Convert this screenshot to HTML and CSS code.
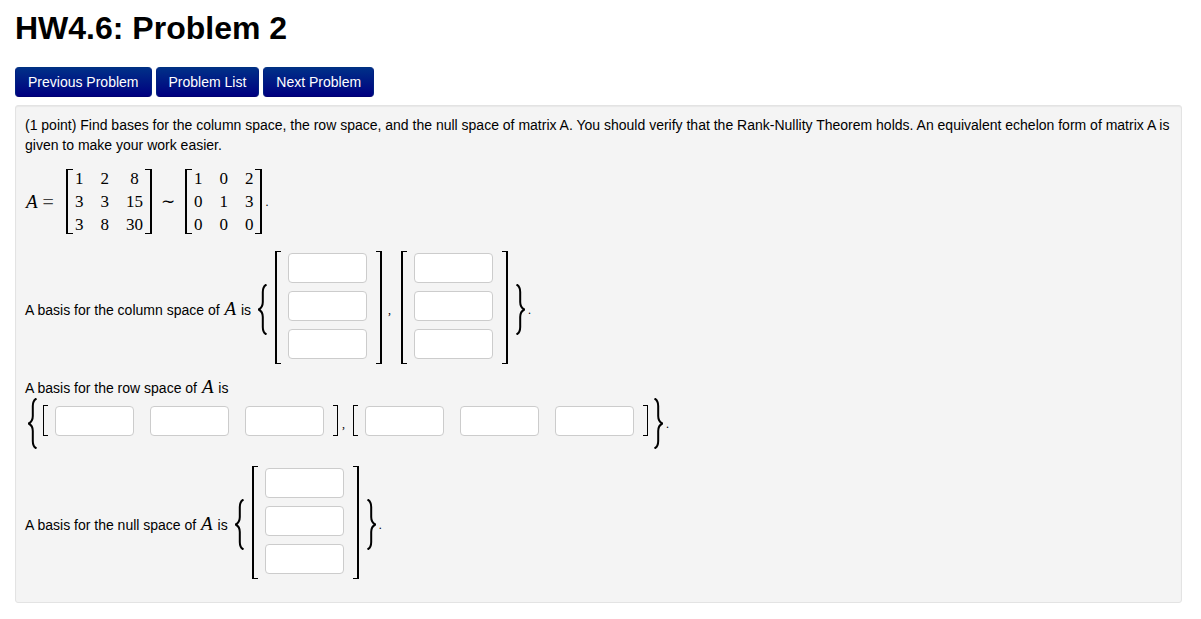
FILE: index.html
```html
<!DOCTYPE html>
<html lang="en">
<head>
  <meta charset="UTF-8">
  <meta name="viewport" content="width=device-width, initial-scale=1.0">
  <title>HW4.6: Problem 2</title>
  <link rel="stylesheet" href="styles.css">
</head>
<body>
  <!-- stretched braces, used around each basis -->
  <svg class="defs" aria-hidden="true">
    <symbol id="brace" viewBox="0 0 9 51">
      <path d="M8.500 .5C5.500 2 4.800 4.500 4.800 8V18C4.800 22 3.500 24 .7 25.500C3.500 27 4.800 29 4.800 33V43C4.800 46.500 5.500 49 8.500 50.500"/>
    </symbol>
  </svg>

  <h1>HW4.6: Problem 2</h1>
  <nav class="problem-nav">
    <a class="btn" href="#prev">Previous Problem</a>
    <a class="btn" href="#list">Problem List</a>
    <a class="btn" href="#next">Next Problem</a>
  </nav>

  <form class="problem">
    <p>(1 point) Find bases for the column space, the row space, and the null space of matrix A. You should verify that the Rank-Nullity Theorem holds. An equivalent echelon form of matrix A is given to make your work easier.</p>

    <div class="equation">
      <i>A</i>
      <span class="sign">=</span>
      <div class="bracket">
        <div class="matrix">
          <span>1</span><span>2</span><span>8</span>
          <span>3</span><span>3</span><span>15</span>
          <span>3</span><span>8</span><span>30</span>
        </div>
      </div>
      <span class="tilde">∼</span>
      <div class="bracket">
        <div class="matrix">
          <span>1</span><span>0</span><span>2</span>
          <span>0</span><span>1</span><span>3</span>
          <span>0</span><span>0</span><span>0</span>
        </div>
      </div>
      <span class="dot">.</span>
    </div>

    <div class="answer">
      <span class="lead">A basis for the column space of <i>A</i> is</span>
      <svg class="brace"><use href="#brace"/></svg>
      <div class="bracket vector">
        <div class="entries">
          <input type="text" aria-label="Column space, vector 1, entry 1">
          <input type="text" aria-label="Column space, vector 1, entry 2">
          <input type="text" aria-label="Column space, vector 1, entry 3">
        </div>
      </div>
      <span class="comma">,</span>
      <div class="bracket vector">
        <div class="entries">
          <input type="text" aria-label="Column space, vector 2, entry 1">
          <input type="text" aria-label="Column space, vector 2, entry 2">
          <input type="text" aria-label="Column space, vector 2, entry 3">
        </div>
      </div>
      <svg class="brace right"><use href="#brace"/></svg>
      <span class="dot">.</span>
    </div>

    <p class="row-lead">A basis for the row space of <i>A</i> is</p>
    <div class="answer row-answer">
      <svg class="brace"><use href="#brace"/></svg>
      <div class="bracket row-vector">
        <div class="entries">
          <input type="text" aria-label="Row space, vector 1, entry 1">
          <input type="text" aria-label="Row space, vector 1, entry 2">
          <input type="text" aria-label="Row space, vector 1, entry 3">
        </div>
      </div>
      <span class="comma">,</span>
      <div class="bracket row-vector">
        <div class="entries">
          <input type="text" aria-label="Row space, vector 2, entry 1">
          <input type="text" aria-label="Row space, vector 2, entry 2">
          <input type="text" aria-label="Row space, vector 2, entry 3">
        </div>
      </div>
      <svg class="brace right"><use href="#brace"/></svg>
      <span class="dot">.</span>
    </div>

    <div class="answer null-answer">
      <span class="lead">A basis for the null space of <i>A</i> is</span>
      <svg class="brace"><use href="#brace"/></svg>
      <div class="bracket vector">
        <div class="entries">
          <input type="text" aria-label="Null space, entry 1">
          <input type="text" aria-label="Null space, entry 2">
          <input type="text" aria-label="Null space, entry 3">
        </div>
      </div>
      <svg class="brace right"><use href="#brace"/></svg>
      <span class="dot">.</span>
    </div>
  </form>
</body>
</html>
```
FILE: styles.css
```css
*,
*::before,
*::after {
    box-sizing: border-box;
}

body {
    font-family: "Liberation Sans", Arial, sans-serif;
    font-size: 14px;
    line-height: 20px;
    color: #000;
    background-color: #fff;
    margin: 0;
    padding: 8px 19px 16px 15px;
}

.defs {
    display: none;
}

h1 {
    font-size: 32px;
    line-height: 40px;
    margin: 0 0 19px;
}

p {
    margin: 0;
}

i {
    font-family: "Liberation Serif", "Times New Roman", serif;
    font-size: 19px;
    line-height: 0;
    margin: 0 1px;
}

.problem-nav {
    display: flex;
    gap: 4px;
    margin-bottom: 8px;
}

.btn {
    padding: 4px 12px;
    border: 1px solid #002a80;
    border-color: #003080 #002080 #000070;
    border-radius: 4px;
    background-image: linear-gradient(#003088, #000080);
    color: #fff;
    text-decoration: none;
}

.btn:hover {
    background-image: none;
    background-color: #000080;
}

.problem {
    padding: 9px 9px 19px;
    border: 1px solid #e3e3e3;
    border-radius: 3px;
    background-color: #f4f4f4;
    box-shadow: inset 0 1px 1px rgba(0, 0, 0, 0.05);
}

.equation {
    display: flex;
    align-items: center;
    font-family: "Liberation Serif", "Times New Roman", serif;
    font-size: 17px;
    margin: 14px 0 17px;
}

.sign {
    font-size: 20px;
    color: #444;
    margin: 0 12px 0 4px;
}

.tilde {
    width: 33px;
    text-align: center;
}

/* square brackets grow with whatever they hold */
.bracket {
    display: flex;
}

.bracket::before,
.bracket::after {
    content: "";
    width: 7px;
    border: 2px solid #000;
    border-width: 1px 0 1px 2px;
}

.bracket::after {
    border-width: 1px 2px 1px 0;
}

.matrix {
    display: grid;
    grid-template-columns: repeat(3, auto);
    column-gap: 17px;
    row-gap: 4px;
    padding: 0 2px;
    line-height: 19px;
    text-align: center;
}

.answer {
    display: flex;
    align-items: center;
}

.lead {
    margin-right: 7px;
}

.brace {
    width: 9px;
    height: 51px;
    fill: none;
    stroke: #000;
    stroke-width: 2;
}

.right {
    transform: scaleX(-1);
    margin-left: 2px;
}

.vector {
    margin: 0 6px 4px 8px;
}

.vector::before,
.vector::after {
    width: 6px;
}

.entries {
    display: flex;
    flex-direction: column;
    gap: 8px;
    padding: 2px 9px 5px 7px;
}

.row-vector {
    margin: 0 4px 6px 6px;
}

.row-vector::before,
.row-vector::after {
    width: 5px;
    border-left-width: 1px;
}

.row-vector::after {
    border-left-width: 0;
    border-right-width: 1px;
}

.row-vector .entries {
    flex-direction: row;
    gap: 16px;
    padding: 1px 9px 0 7px;
}

.comma,
.dot {
    font-family: "Liberation Serif", "Times New Roman", serif;
    font-size: 12px;
}

.comma {
    width: 5px;
}

.dot {
    margin-left: 3px;
}

input {
    width: 79px;
    height: 30px;
    padding: 4px 6px;
    border: 1px solid #ccc;
    border-radius: 4px;
    background-color: #fff;
    font-family: inherit;
    font-size: 14px;
}

input:focus {
    border-color: #52a8ec;
    outline: none;
}

.row-lead {
    margin-top: 10px;
}

.row-answer {
    margin-left: 3px;
}

.null-answer {
    margin-top: 17px;
}
```
